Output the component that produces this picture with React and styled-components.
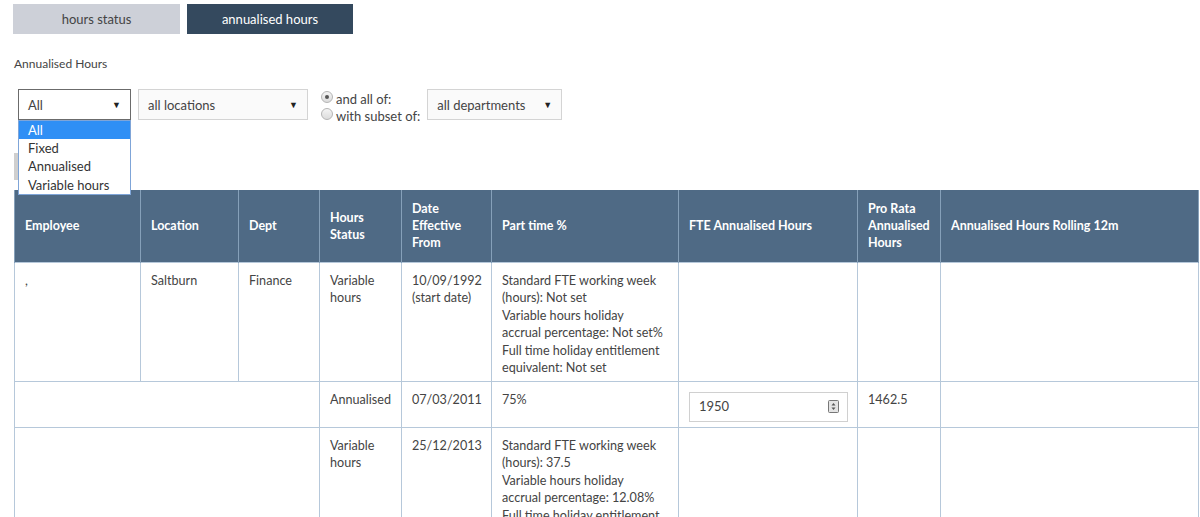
import React from "react";
import styled, { createGlobalStyle } from "styled-components";

const Global = createGlobalStyle`
  html, body { margin: 0; padding: 0; background: #fff; }
  body { font-family: Lato, "Open Sans", sans-serif; color: #444; font-size: 12.6px; }
  * { box-sizing: border-box; }
`;

const Page = styled.div`
  padding: 4px 2px 0 13px;
`;

const Tabs = styled.div`
  display: flex;
  gap: 7px;
`;

const Tab = styled.div`
  width: ${(p) => p.$w}px;
  height: 30px;
  display: flex;
  align-items: center;
  justify-content: center;
  font-size: 13px;
  background: ${(p) => (p.$active ? "#34495e" : "#cdd0d8")};
  color: ${(p) => (p.$active ? "#fff" : "#444")};
`;

const Heading = styled.div`
  margin: 22px 0 0 1px;
  font-size: 12px;
  color: #444;
  line-height: 16px;
`;

const Filters = styled.div`
  display: flex;
  align-items: flex-start;
  margin: 17px 0 0 5px;
  gap: 7px;
  position: relative;
`;

const SelectWrap = styled.div`
  position: relative;
`;

const SelectBox = styled.div`
  width: ${(p) => p.$w}px;
  height: 31px;
  border: 1px solid ${(p) => (p.$focus ? "#6b6b6b" : "#d4d4d4")};
  background: ${(p) => (p.$focus ? "#fff" : "#fafafa")};
  display: flex;
  align-items: center;
  justify-content: space-between;
  padding: 0 9px 0 9px;
  font-size: 13px;
  color: #444;
`;

const Arrow = styled.span`
  font-size: 9px;
  color: #222;
`;

const DropList = styled.div`
  position: absolute;
  top: 31px;
  left: 0;
  width: 113px;
  background: #fff;
  border: 1px solid #7fa5d8;
  z-index: 5;
`;

const Option = styled.div`
  height: 18.2px;
  line-height: 18px;
  padding-left: 9px;
  font-size: 13px;
  background: ${(p) => (p.$sel ? "#2f8ff5" : "#fff")};
  color: ${(p) => (p.$sel ? "#fff" : "#333")};
`;

const Radios = styled.div`
  display: flex;
  flex-direction: column;
  margin-left: 6px;
  padding-top: 2px;
`;

const RadioRow = styled.label`
  display: flex;
  align-items: center;
  gap: 3px;
  font-size: 13px;
  line-height: 17px;
  color: #444;
`;

const RadioDot = styled.span`
  width: 12px;
  height: 12px;
  border-radius: 50%;
  border: 1px solid #b5b5b5;
  background: linear-gradient(#f4f4f4, #dcdcdc);
  display: inline-flex;
  align-items: center;
  justify-content: center;
  position: relative;
  top: -3px;
  &::after {
    content: "";
    width: 4px;
    height: 4px;
    border-radius: 50%;
    background: ${(p) => (p.$on ? "#555" : "transparent")};
  }
`;

const GrayButton = styled.div`
  margin: 28px 0 0 1px;
  width: 80px;
  height: 27px;
  background: #cfcfcf;
`;

const Table = styled.table`
  margin: 10px 0 0 1px;
  width: 1184px;
  border-collapse: collapse;
  table-layout: fixed;
`;

const Th = styled.th`
  background: #4f6a85;
  color: #fff;
  font-weight: 700;
  font-size: 12.5px;
  line-height: 17px;
  text-align: left;
  padding: 10px 10px;
  height: 72px;
  vertical-align: middle;
  border-left: 1px solid #86a0b9;
  border-right: 1px solid #86a0b9;
`;

const Td = styled.td`
  border: 1px solid #b6c8da;
  padding: 9px 10px 4px;
  vertical-align: top;
  font-size: 12.6px;
  line-height: 17.5px;
  color: #444;
`;

const Line = styled.span`
  display: block;
  white-space: nowrap;
`;

const NumInput = styled.div`
  width: 159px;
  height: 30px;
  border: 1px solid #d0d0d0;
  display: flex;
  align-items: center;
  justify-content: space-between;
  padding: 0 8px 0 9px;
  margin: 1px 0 1px 0;
  font-size: 13px;
  color: #444;
`;

const Spinner = () => (
  <svg width="11" height="13" viewBox="0 0 11 13">
    <rect x="0.5" y="0.5" width="10" height="12" rx="1" fill="#e4e4e4" stroke="#777" />
    <path d="M3.5 5.5 L5.5 3 L7.5 5.5 Z" fill="#555" />
    <path d="M3.5 7.5 L5.5 10 L7.5 7.5 Z" fill="#555" />
  </svg>
);

const cols = [126, 98, 81, 82, 90, 187, 179, 83, 258];

const Lines = ({ items }) => items.map((t, i) => <Line key={i}>{t}</Line>);

export default function App() {
  return (
    <>
      <Global />
      <Page>
        <Tabs>
          <Tab $w={167}>hours status</Tab>
          <Tab $w={166} $active>annualised hours</Tab>
        </Tabs>
        <Heading>Annualised Hours</Heading>
        <Filters>
          <SelectWrap>
            <SelectBox $w={113} $focus>
              <span>All</span>
              <Arrow>▼</Arrow>
            </SelectBox>
            <DropList>
              <Option $sel>All</Option>
              <Option>Fixed</Option>
              <Option>Annualised</Option>
              <Option>Variable hours</Option>
            </DropList>
          </SelectWrap>
          <SelectBox $w={170}>
            <span>all locations</span>
            <Arrow>▼</Arrow>
          </SelectBox>
          <Radios>
            <RadioRow>
              <RadioDot $on />
              and all of:
            </RadioRow>
            <RadioRow>
              <RadioDot />
              with subset of:
            </RadioRow>
          </Radios>
          <SelectBox $w={135}>
            <span>all departments</span>
            <Arrow>▼</Arrow>
          </SelectBox>
        </Filters>
        <GrayButton />
        <Table>
          <colgroup>
            {cols.map((w, i) => (
              <col key={i} style={{ width: w }} />
            ))}
          </colgroup>
          <thead>
            <tr>
              <Th>Employee</Th>
              <Th>Location</Th>
              <Th>Dept</Th>
              <Th>Hours Status</Th>
              <Th>Date Effective From</Th>
              <Th>Part time %</Th>
              <Th>FTE Annualised Hours</Th>
              <Th>Pro Rata Annualised Hours</Th>
              <Th>Annualised Hours Rolling 12m</Th>
            </tr>
          </thead>
          <tbody>
            <tr>
              <Td>,</Td>
              <Td>Saltburn</Td>
              <Td>Finance</Td>
              <Td>Variable hours</Td>
              <Td>10/09/1992 (start date)</Td>
              <Td>
                <Lines
                  items={[
                    "Standard FTE working week",
                    "(hours): Not set",
                    "Variable hours holiday",
                    "accrual percentage: Not set%",
                    "Full time holiday entitlement",
                    "equivalent: Not set",
                  ]}
                />
              </Td>
              <Td />
              <Td />
              <Td />
            </tr>
            <tr>
              <Td colSpan={3} />
              <Td>Annualised</Td>
              <Td>07/03/2011</Td>
              <Td>75%</Td>
              <Td>
                <NumInput>
                  <span>1950</span>
                  <Spinner />
                </NumInput>
              </Td>
              <Td>1462.5</Td>
              <Td />
            </tr>
            <tr>
              <Td colSpan={3} />
              <Td>Variable hours</Td>
              <Td>25/12/2013</Td>
              <Td>
                <Lines
                  items={[
                    "Standard FTE working week",
                    "(hours): 37.5",
                    "Variable hours holiday",
                    "accrual percentage: 12.08%",
                    "Full time holiday entitlement",
                    "equivalent: 37.5",
                  ]}
                />
              </Td>
              <Td />
              <Td />
              <Td />
            </tr>
          </tbody>
        </Table>
      </Page>
    </>
  );
}
